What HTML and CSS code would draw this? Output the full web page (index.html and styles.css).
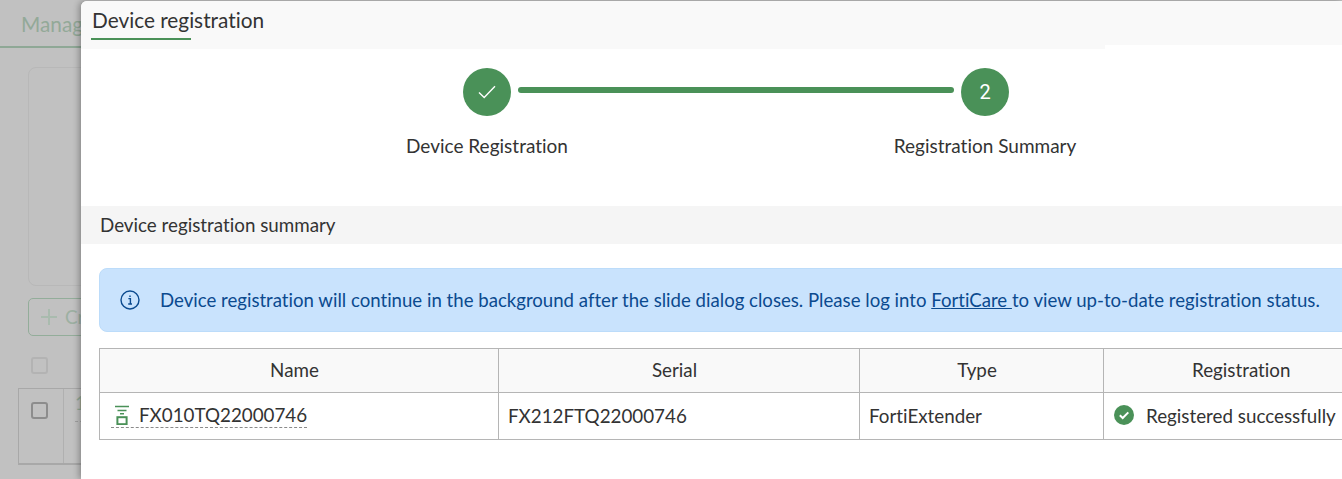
FILE: index.html
```html
<!DOCTYPE html>
<html lang="en">
<head>
<meta charset="utf-8">
<title>Device registration</title>
<link rel="stylesheet" href="styles.css">
</head>
<body>
<div class="shell">
  <aside class="backdrop">
    <div class="bg-tab"><span>Manage</span></div>
    <div class="bg-card"></div>
    <div class="bg-btn"><svg class="bg-plus" width="16" height="16" viewBox="0 0 16 16"><path d="M8 0v16M0 8h16"/></svg><span>Create</span></div>
    <div class="bg-check bg-check-top"></div>
    <div class="bg-row">
      <div class="bg-cell-check"><div class="bg-check bg-check-dark"></div></div>
      <div class="bg-cell-name"><span class="bg-glyph">1</span></div>
    </div>
  </aside>
  <main class="dialog">
    <header class="head">
      <div class="head-left">
        <div class="tab">Device registration</div>
      </div>
      <div class="head-right"></div>
    </header>
    <section class="stepper">
      <div class="step">
        <div class="circle">
          <svg width="18" height="14" viewBox="0 0 18 14"><path class="tick" d="M1 7.5l5.2 5L17 1.3"/></svg>
        </div>
        <div class="step-label">Device Registration</div>
      </div>
      <div class="connector"></div>
      <div class="step step-last">
        <div class="circle circle-num">2</div>
        <div class="step-label">Registration Summary</div>
      </div>
    </section>
    <div class="band">Device registration summary</div>
    <div class="content">
      <div class="alert">
        <svg class="alert-icon" width="20" height="20" viewBox="0 0 20 20"><circle cx="10" cy="10" r="9" fill="none" stroke="#0b4a8f" stroke-width="1.4"/><path d="M8.4 8.6h2v5M8.2 14h3.8M10 5.4v1.5" fill="none" stroke="#0b4a8f" stroke-width="1.4"/></svg>
        <span>Device registration will continue in the background after the slide dialog closes. Please log into <a class="alert-link" href="#">FortiCare </a>to view up-to-date registration status.</span>
      </div>
      <table class="grid">
        <colgroup>
          <col class="c1"><col class="c2"><col class="c3"><col class="c4">
        </colgroup>
        <thead>
          <tr><th>Name</th><th>Serial</th><th>Type</th><th>Registration</th></tr>
        </thead>
        <tbody>
          <tr>
            <td>
              <span class="device">
                <svg class="device-icon" width="16" height="20" viewBox="0 0 16 20"><path d="M1 1.5h14M3.5 5.5h9M6 8.8h4" fill="none" stroke="#4a9158" stroke-width="1.6"/><rect x="3.4" y="12.2" width="9.2" height="7" fill="none" stroke="#4a9158" stroke-width="2"/></svg>
                <span>FX010TQ22000746</span>
              </span>
            </td>
            <td class="lifted">FX212FTQ22000746</td>
            <td class="lifted">FortiExtender</td>
            <td class="lifted">
              <span class="status">
                <svg width="20" height="20" viewBox="0 0 20 20"><circle cx="10" cy="10" r="10" fill="#4a9158"/><path d="M5.8 10.3l2.9 2.7 5.6-5.6" fill="none" stroke="#fff" stroke-width="2"/></svg>
                <span>Registered successfully</span>
              </span>
            </td>
          </tr>
        </tbody>
      </table>
    </div>
  </main>
</div>
</body>
</html>
```
FILE: styles.css
```css
* { box-sizing: border-box; }
html, body { margin: 0; height: 100%; overflow: hidden; }
body {
  background: #c1c1c1;
  font-family: Lato, "Open Sans", sans-serif;
  font-variant-ligatures: none;
  color: #333;
}
.shell {
  display: grid;
  grid-template-columns: 81px 1fr;
  width: 1342px;
  height: 479px;
  overflow: hidden;
}
.backdrop {
  overflow: hidden;
  display: flex;
  flex-direction: column;
  min-width: 0;
}
.bg-tab {
  height: 48px;
  flex: none;
  width: 81px;
  padding: 11px 0 0 21px;
  border-bottom: 2px solid #8fa896;
  color: #93a998;
  font-size: 20.8px;
  line-height: 26px;
  white-space: nowrap;
}
.bg-card {
  flex: none;
  width: 90px;
  height: 219px;
  margin: 19px 0 0 28px;
  border: 1px solid #b8b8b8;
  border-radius: 8px;
  background: #c1c1c1;
}
.bg-btn {
  flex: none;
  display: flex;
  align-items: center;
  gap: 8px;
  width: 110px;
  height: 38px;
  margin: 12px 0 0 28px;
  padding-left: 12px;
  border: 1px solid #93ad9a;
  border-radius: 5px;
  color: #9db0a2;
  font-size: 18.67px;
  white-space: nowrap;
}
.bg-plus path { stroke: #a9bbae; stroke-width: 2; fill: none; }
.bg-check {
  width: 17px;
  height: 17px;
  border: 2px solid #b3b3b3;
  border-radius: 3px;
}
.bg-check-top { flex: none; margin: 21px 0 0 31px; }
.bg-check-dark { border-color: #8d8d8d; }
.bg-row {
  flex: none;
  display: flex;
  width: 120px;
  height: 77px;
  margin: 14px 0 0 18px;
  border: 1px solid #a8a8a8;
  border-right: 0;
  border-bottom-width: 2px;
}
.bg-cell-check {
  width: 45px;
  padding: 13px 0 0 12px;
  border-right: 1px solid #b0b0b0;
}
.bg-cell-name {
  padding: 0 0 0 11px;
}
.bg-glyph {
  display: inline-block;
  width: 60px;
  height: 33px;
  line-height: 28px;
  border-bottom: 1px dashed #a0a0a0;
  color: #93a998;
  font-size: 18.67px;
}
.dialog {
  min-width: 0;
  overflow: hidden;
  background: #fff;
  border-top-left-radius: 6px;
  box-shadow: -2px 0 6px rgba(0, 0, 0, .3);
  margin-top: 1px;
  position: relative;
}
.head {
  display: flex;
  align-items: flex-start;
  height: 48px;
}
.head-left {
  width: 1024px;
  height: 48px;
  background: #f9f9f9;
  padding-left: 10px;
}
.head-right {
  flex: 1;
  height: 44px;
  background: #f9f9f9;
}
.tab {
  display: inline-block;
  width: 100px;
  height: 39px;
  padding: 6px 0 0 1px;
  border-bottom: 2px solid #4a9158;
  font-size: 20.8px;
  line-height: 26px;
  white-space: nowrap;
}
.stepper {
  display: flex;
  align-items: flex-start;
  height: 157px;
  padding: 19px 0 0 325px;
}
.step {
  width: 162px;
  display: flex;
  flex-direction: column;
  align-items: center;
  flex: none;
  white-space: nowrap;
}
.step-last { width: 184px; margin-left: -61px; }
.circle {
  width: 48px;
  height: 48px;
  border-radius: 50%;
  background: #4a9158;
  display: flex;
  align-items: center;
  justify-content: center;
  color: #fff;
}
.circle-num {
  font-family: Roboto, sans-serif;
  font-size: 20px;
  font-weight: 400;
}
.tick { fill: none; stroke: #fff; stroke-width: 1.4; }
.step-label {
  margin-top: 18px;
  font-size: 19px;
  line-height: 24px;
}
.connector {
  flex: none;
  width: 436px;
  height: 6px;
  margin: 19px 0 0 -50px;
  border-radius: 3px;
  background: #4a9158;
}
.band {
  height: 38px;
  padding-left: 19px;
  background: #f5f5f5;
  font-size: 18.8px;
  line-height: 38px;
}
.content {
  width: 1320px;
  padding: 24px 18px 0;
}
.alert {
  display: flex;
  align-items: center;
  gap: 20px;
  height: 64px;
  padding-left: 20px;
  border: 1px solid #bcdcfa;
  border-radius: 8px;
  background: #c9e3fd;
  color: #0b4a8f;
  font-size: 18.63px;
  white-space: nowrap;
}
.alert-icon { flex: none; }
.alert-link { color: inherit; text-decoration: underline; }
.grid {
  table-layout: fixed;
  border-collapse: collapse;
  width: 1400px;
  margin-top: 16px;
  font-size: 18.8px;
}
.c1 { width: 399px; }
.c2 { width: 361px; }
.c3 { width: 244px; }
.c4 { width: 396px; }
.grid th, .grid td {
  border: 1px solid #b5b5b5;
  padding: 0 9px;
}
.grid th {
  height: 44px;
  padding: 0 18px 2px 9px;
  background: #f9f9f9;
  font-weight: 400;
  text-align: center;
}
.grid th:last-child { text-align: left; padding-left: 88px; }
.grid td { height: 47px; }
.grid td.lifted { padding-bottom: 2px; }
.grid td:first-child { padding-left: 11px; }
.device {
  display: inline-flex;
  align-items: center;
  gap: 9px;
  padding: 0 0 1px 3px;
  border-bottom: 1px dashed #8a8a8a;
}
.device-icon { flex: none; }
.status {
  display: flex;
  align-items: center;
  gap: 12px;
  padding-left: 1px;
}
```
